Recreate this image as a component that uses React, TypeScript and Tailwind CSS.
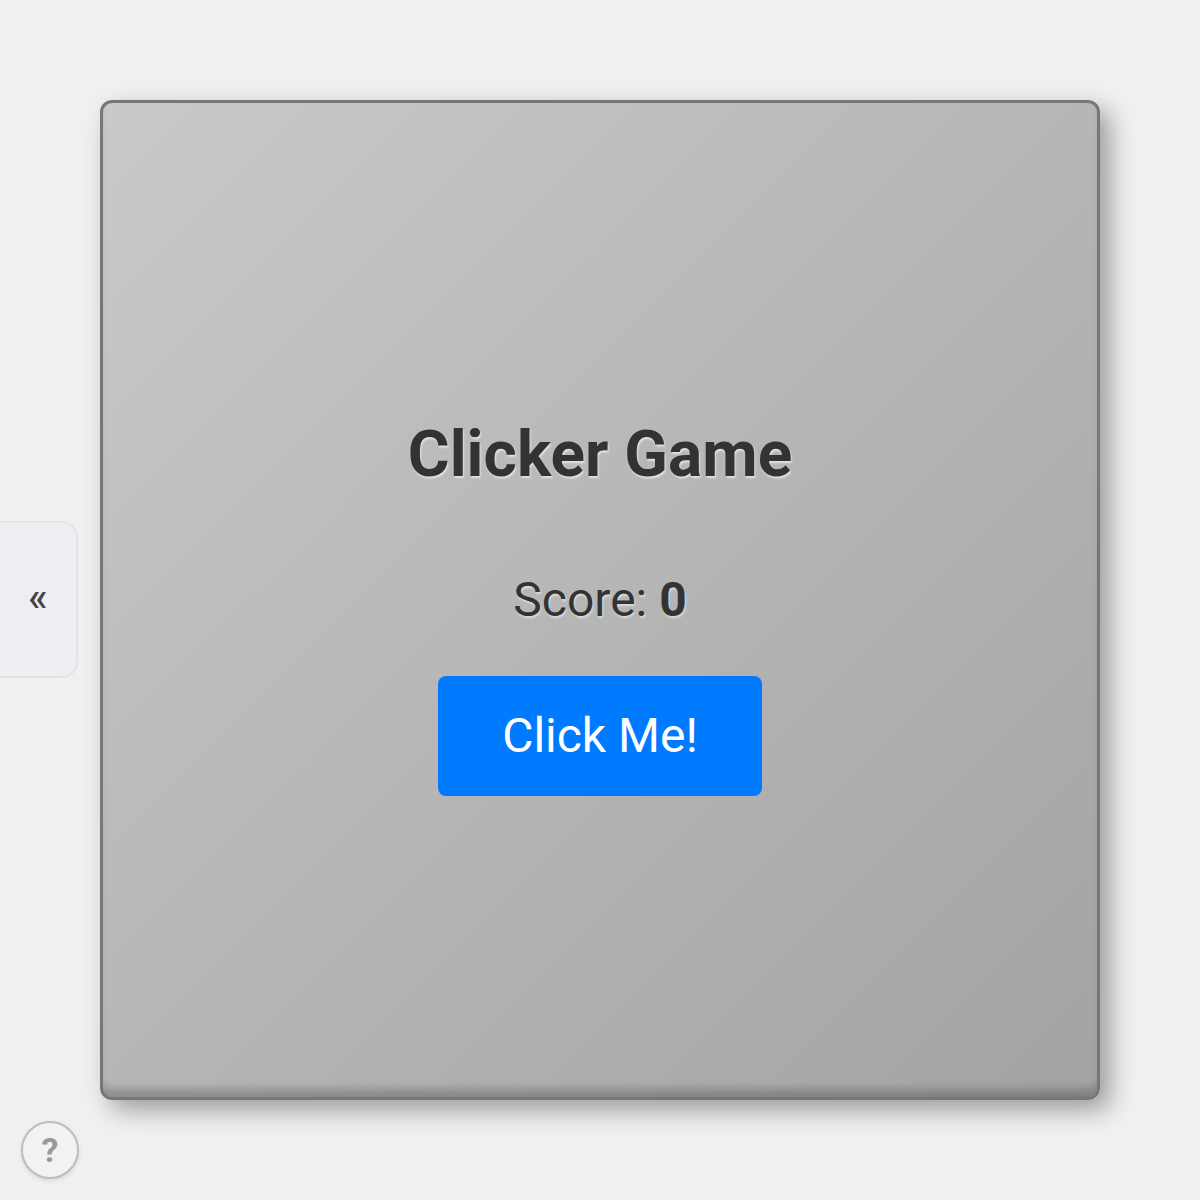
import React, { useState } from "react";

export default function App() {
  const [score, setScore] = useState(0);
  return (
    <div
      className="relative w-[1200px] h-[1200px] bg-[#f0f0f0] overflow-hidden"
      style={{ fontFamily: "Roboto, 'Liberation Sans', sans-serif" }}
    >
      <div className="absolute left-[100px] top-[100px] w-[1000px] h-[1000px] rounded-[12px] border-[3px] border-[#777777] bg-gradient-to-br from-[#c9c9c9] to-[#a3a3a3] shadow-[10px_10px_24px_rgba(0,0,0,0.35),inset_0_-12px_8px_-4px_rgba(0,0,0,0.22)] flex flex-col items-center justify-center pt-[12px]">
        <h1 className="text-[64px] leading-[77px] font-bold text-[#333333] [text-shadow:1px_2px_2px_rgba(255,255,255,0.6)] m-0">
          Clicker Game
        </h1>
        <p className="mt-[78px] text-[48px] leading-[58px] text-[#333333] [text-shadow:1px_2px_2px_rgba(255,255,255,0.5)]">
          Score: <span className="font-bold">{score}</span>
        </p>
        <button
          onClick={() => setScore(score + 1)}
          className="mt-[47px] w-[324px] h-[120px] rounded-[8px] bg-[#007bff] text-white text-[48px] leading-none flex items-center justify-center"
        >
          Click Me!
        </button>
      </div>

      <div className="absolute left-[-20px] top-[521px] w-[98px] h-[157px] rounded-[16px] bg-[#eceef1] border-2 border-[#e1e3e6] flex items-center justify-center pl-[18px]">
        <span className="text-[40px] leading-none font-medium text-[#444444] -mt-[4px]">«</span>
      </div>

      <div className="absolute left-[21px] top-[1121px] w-[58px] h-[58px] rounded-full border-2 border-[#bdbdbd] bg-[#f2f2f2] shadow-[0_2px_4px_rgba(0,0,0,0.1)] flex items-center justify-center">
        <span className="text-[34px] leading-none font-bold text-[#999999]">?</span>
      </div>
    </div>
  );
}
